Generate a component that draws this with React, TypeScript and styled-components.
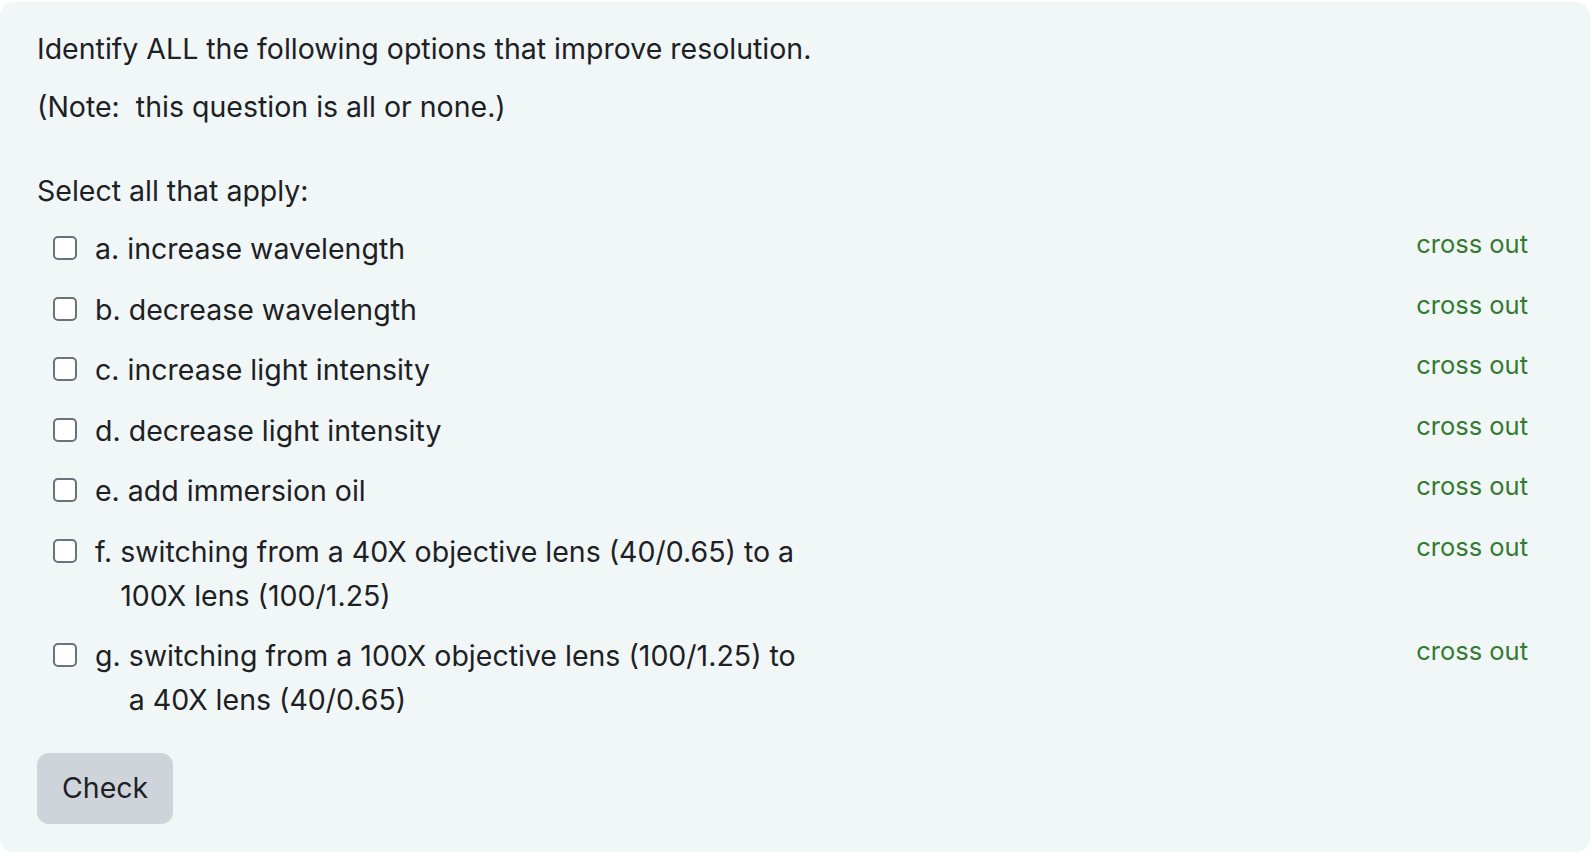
import styled, { createGlobalStyle } from 'styled-components';

const GlobalStyle = createGlobalStyle`
  html, body {
    margin: 0;
    padding: 0;
    background: #ffffff;
  }
  body {
    font-family: Inter, "Noto Sans", "Liberation Sans", sans-serif;
    color: #1d2125;
  }
`;

const Panel = styled.div`
  margin-top: 2px;
  width: 1590px;
  height: 850px;
  box-sizing: border-box;
  background: #f1f7f7;
  border-radius: 14px;
  padding: 25px 62px 0 37px;
`;

const Para = styled.p<{ $gap?: number }>`
  margin: 0 0 ${(p) => p.$gap ?? 14}px;
  font-size: 28.5px;
  line-height: 44px;
`;

const Options = styled.div`
  display: flex;
  flex-direction: column;
  padding-top: 6px;
`;

const Row = styled.div`
  display: flex;
  align-items: flex-start;
  padding: 8px 0 8.5px 16px;
`;

const Box = styled.span`
  flex: none;
  width: 24px;
  height: 24px;
  box-sizing: border-box;
  margin-top: 9px;
  border: 2px solid #6a737b;
  border-radius: 5px;
  background: #ffffff;
`;

const Label = styled.label`
  display: flex;
  width: 710px;
  margin-left: 18px;
  font-size: 28.5px;
  line-height: 44px;
`;

const Num = styled.span`
  flex: none;
  white-space: pre;
`;

const Text = styled.span`
  flex: 1;
`;

const CrossOut = styled.a`
  margin-left: auto;
  margin-top: -5px;
  font-size: 25.5px;
  line-height: 44px;
  color: #357a32;
  text-decoration: none;
`;

const Button = styled.button`
  margin-top: 22px;
  height: 71px;
  padding: 0 25px;
  border: none;
  border-radius: 12px;
  background: #ced4da;
  color: #1d2125;
  font-family: inherit;
  font-size: 28.5px;
  line-height: 44px;
`;

const answers = [
  ['a. ', 'increase wavelength'],
  ['b. ', 'decrease wavelength'],
  ['c. ', 'increase light intensity'],
  ['d. ', 'decrease light intensity'],
  ['e. ', 'add immersion oil'],
  ['f. ', 'switching from a 40X objective lens (40/0.65) to a 100X lens (100/1.25)'],
  ['g. ', 'switching from a 100X objective lens (100/1.25) to a 40X lens (40/0.65)'],
];

export default function App() {
  return (
    <>
      <GlobalStyle />
      <Panel>
        <Para>Identify ALL the following options that improve resolution.</Para>
        <Para $gap={40}>(Note:&nbsp; this question is all or none.)</Para>
        <Para $gap={0}>Select all that apply:</Para>
        <Options>
          {answers.map(([n, t]) => (
            <Row key={n}>
              <Box />
              <Label>
                <Num>{n}</Num>
                <Text>{t}</Text>
              </Label>
              <CrossOut href="#">cross out</CrossOut>
            </Row>
          ))}
        </Options>
        <Button>Check</Button>
      </Panel>
    </>
  );
}
